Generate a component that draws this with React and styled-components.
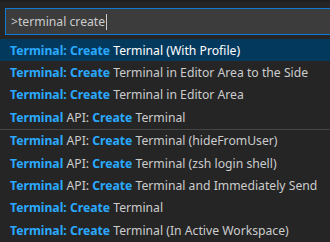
import React from "react";
import styled, { createGlobalStyle } from "styled-components";

const Global = createGlobalStyle`
  html, body {
    margin: 0;
    padding: 0;
    background: #252526;
    overflow: hidden;
  }
`;

const Widget = styled.div`
  width: 330px;
  height: 242px;
  background: #252526;
  border-top: 2px solid #1f1f1f;
  box-sizing: border-box;
  font-family: "Noto Sans", "Open Sans", sans-serif;
  font-size: 12.2px;
  color: #cccccc;
  overflow: hidden;
`;

const InputWrap = styled.div`
  padding: 6px 0 4px 5px;
`;

const Input = styled.div`
  height: 25px;
  background: #3c3c3c;
  border: 1px solid #0e7ad3;
  border-right: none;
  display: flex;
  align-items: center;
  padding-left: 5px;
  color: #cccccc;
`;

const Caret = styled.span`
  display: inline-block;
  width: 1px;
  height: 16px;
  background: #cccccc;
  margin-left: 1px;
`;

const List = styled.div`
  display: flex;
  flex-direction: column;
`;

const Row = styled.div`
  height: 22.4px;
  display: flex;
  align-items: center;
  padding-left: 10px;
  white-space: pre;
  background: ${(p) => (p.$active ? "#04395e" : "transparent")};
  color: ${(p) => (p.$active ? "#ffffff" : "#cccccc")};
  border-top: ${(p) => (p.$sep ? "1px solid #454545" : "none")};
`;

const Hl = styled.span`
  color: #2aaaff;
  font-weight: 700;
`;

const rows = [
  { parts: [["Terminal: Create", true], [" Terminal (With Profile)"]], active: true },
  { parts: [["Terminal: Create", true], [" Terminal in Editor Area to the Side"]] },
  { parts: [["Terminal: Create", true], [" Terminal in Editor Area"]] },
  { parts: [["Terminal", true], [" API: "], ["Create", true], [" Terminal"]] },
  { parts: [["Terminal", true], [" API: "], ["Create", true], [" Terminal (hideFromUser)"]], sep: true },
  { parts: [["Terminal", true], [" API: "], ["Create", true], [" Terminal (zsh login shell)"]] },
  { parts: [["Terminal", true], [" API: "], ["Create", true], [" Terminal and Immediately Send"]] },
  { parts: [["Terminal: Create", true], [" Terminal"]] },
  { parts: [["Terminal: Create", true], [" Terminal (In Active Workspace)"]] },
];

export default function App() {
  return (
    <Widget>
      <Global />
      <InputWrap>
        <Input>
          &gt;terminal create
          <Caret />
        </Input>
      </InputWrap>
      <List>
        {rows.map((r, i) => (
          <Row key={i} $active={r.active} $sep={r.sep}>
            {r.parts.map(([t, h], j) => (h ? <Hl key={j}>{t}</Hl> : <span key={j}>{t}</span>))}
          </Row>
        ))}
      </List>
    </Widget>
  );
}
